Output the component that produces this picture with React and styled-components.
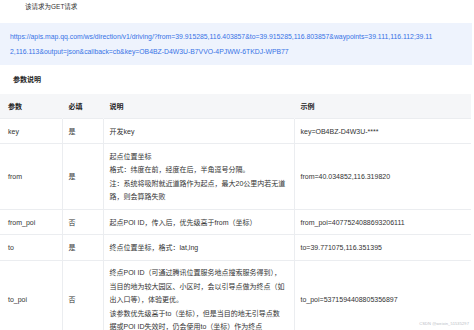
import React from "react";
import styled, { createGlobalStyle } from "styled-components";

const Global = createGlobalStyle`
  html, body { margin: 0; padding: 0; background: #fff; }
  body {
    font-family: "Liberation Sans", "Noto Sans CJK SC", sans-serif;
    color: #333;
    width: 474px;
    height: 330px;
    overflow: hidden;
  }
`;

const Page = styled.div`
  position: relative;
  width: 472px;
  height: 330px;
  overflow: hidden;
`;

const Title = styled.div`
  margin-left: 25px;
  height: 14px;
  line-height: 14px;
  font-size: 6.5px;
  color: #333;
`;

const CodeBox = styled.div`
  margin-top: 9px;
  background: #eef3fd;
  padding: 6px 10px;
  height: 42px;
  box-sizing: border-box;
  display: flex;
  flex-direction: column;
  justify-content: center;
`;

const CodeLine = styled.div`
  line-height: 15px;
  font-size: 6.85px;
  color: #3672e6;
  white-space: nowrap;
`;

const Section = styled.div`
  margin-top: 8px;
  margin-left: 13px;
  height: 14px;
  line-height: 14px;
  font-size: 7px;
  font-weight: bold;
  color: #222;
`;

const Table = styled.table`
  margin-top: 7px;
  width: 471px;
  border-collapse: collapse;
  table-layout: fixed;
  font-size: 7px;
`;

const Th = styled.th`
  background: #f5f6f8;
  text-align: left;
  font-weight: bold;
  color: #222;
  height: 24px;
  padding: 0 ${(p) => p.$pl || 6}px;
  border-left: ${(p) => (p.$first ? "none" : "1px solid #f5f6f8")};
`;

const Td = styled.td`
  padding: 5.5px ${(p) => p.$pl || 6}px;
  line-height: 13.4px;
  white-space: nowrap;
  vertical-align: middle;
  border-top: 1px solid #ebedf0;
  border-left: ${(p) => (p.$first ? "none" : "1px solid #ebedf0")};
  color: #333;
`;

const Watermark = styled.div`
  position: absolute;
  right: 3px;
  bottom: 4px;
  font-size: 4px;
  color: #b8bcc4;
  letter-spacing: 0.1px;
`;

const rows = [
  { name: "key", req: "是", desc: ["开发key"], ex: "key=OB4BZ-D4W3U-****" },
  {
    name: "from",
    req: "是",
    desc: [
      "起点位置坐标",
      "格式：纬度在前，经度在后，半角逗号分隔。",
      "注：系统将吸附就近道路作为起点，最大20公里内若无道",
      "路，则会算路失败",
    ],
    ex: "from=40.034852,116.319820",
  },
  {
    name: "from_poi",
    req: "否",
    desc: ["起点POI ID，传入后，优先级高于from（坐标）"],
    ex: "from_poi=4077524088693206111",
  },
  { name: "to", req: "是", desc: ["终点位置坐标，格式：lat,lng"], ex: "to=39.771075,116.351395" },
  {
    name: "to_poi",
    req: "否",
    desc: [
      "终点POI ID（可通过腾讯位置服务地点搜索服务得到），",
      "当目的地为较大园区、小区时，会以引导点做为终点（如",
      "出入口等），体验更优。",
      "该参数优先级高于to（坐标），但是当目的地无引导点数",
      "据或POI ID失效时，仍会使用to（坐标）作为终点",
    ],
    ex: "to_poi=5371594408805356897",
  },
];

export default function App() {
  return (
    <>
      <Global />
      <Page>
        <Title>该请求为GET请求</Title>
        <CodeBox>
          <CodeLine>
            https://apis.map.qq.com/ws/direction/v1/driving/?from=39.915285,116.403857&amp;to=39.915285,116.803857&amp;waypoints=39.111,116.112;39.11
          </CodeLine>
          <CodeLine>2,116.113&amp;output=json&amp;callback=cb&amp;key=OB4BZ-D4W3U-B7VVO-4PJWW-6TKDJ-WPB77</CodeLine>
        </CodeBox>
        <Section>参数说明</Section>
        <Table>
          <colgroup>
            <col style={{ width: 62 }} />
            <col style={{ width: 41 }} />
            <col style={{ width: 191 }} />
            <col />
          </colgroup>
          <thead>
            <tr>
              <Th $first $pl={8}>参数</Th>
              <Th>必填</Th>
              <Th>说明</Th>
              <Th>示例</Th>
            </tr>
          </thead>
          <tbody>
            {rows.map((r) => (
              <tr key={r.name}>
                <Td $first $pl={8}>{r.name}</Td>
                <Td>{r.req}</Td>
                <Td>
                  {r.desc.map((d, i) => (
                    <div key={i}>{d}</div>
                  ))}
                </Td>
                <Td>{r.ex}</Td>
              </tr>
            ))}
          </tbody>
        </Table>
        <Watermark>CSDN @weixin_51535297</Watermark>
      </Page>
    </>
  );
}
